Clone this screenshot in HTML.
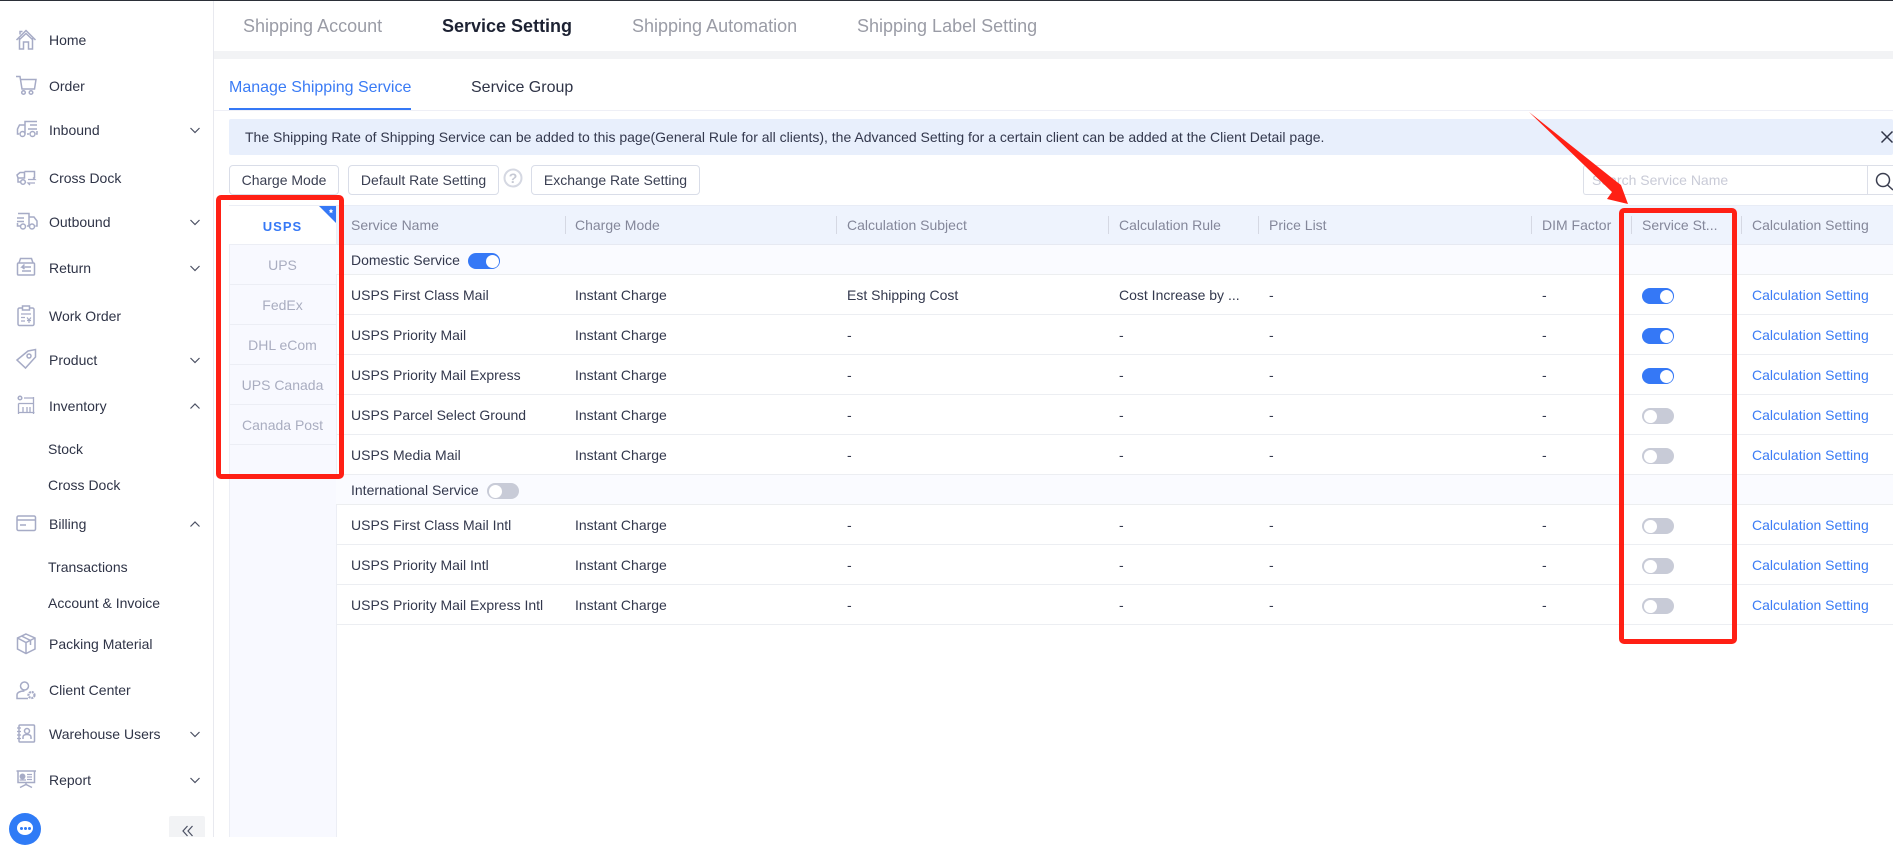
<!DOCTYPE html>
<html lang="en"><head><meta charset="utf-8"><title>Service Setting</title>
<style>
html,body{margin:0;padding:0;background:#fff}
body{width:1893px;height:837px;overflow:hidden;position:relative;font-family:"Liberation Sans",Arial,sans-serif;font-size:14px;color:#33384d}
div,span.a{position:absolute;white-space:nowrap;box-sizing:border-box}
.n{left:49px;height:20px;line-height:20px;color:#2f3447}
.s{left:48px;height:20px;line-height:20px;color:#2f3447}
.t{top:14px;height:24px;line-height:24px;font-size:18px;color:#9a9ca6}
.h{top:205px;height:40px;line-height:40px;color:#84879a}
.d{top:216px;width:1px;height:18px;background:#d5d8e3}
.l{left:229px;width:107px;height:40px;line-height:40px;text-align:center;color:#a9adc0;border-bottom:1px solid #eceef5}
.g{left:336px;width:1557px;background:#fafbff;border-bottom:1px solid #eceef0}
.r{left:336px;width:1557px;height:40px;border-bottom:1px solid #eceef2}
.c{height:40px;line-height:41px;color:#33384d}
.lk{left:1752px;color:#3b7cf5}
.tg{width:32px;height:16px;border-radius:8px}
.on{background:#3578f6}
.on:after{content:"";position:absolute;right:1.500px;top:1.500px;width:13px;height:13px;border-radius:50%;background:#fff}
.off{background:#c8cbd7}
.off:after{content:"";position:absolute;left:1.500px;top:1.500px;width:13px;height:13px;border-radius:50%;background:#fff}
.b{top:165px;height:30px;line-height:28px;border:1px solid #d9dde8;border-radius:4px;text-align:center;color:#3a3f52;background:#fff}
</style></head><body>

<div style="left:0;top:0;width:1893px;height:1px;background:#2b2f38;z-index:5"></div>
<div style="left:213px;top:0;width:1px;height:837px;background:#e8e9ef"></div>

<svg width="213" height="837" viewBox="0 0 213 837" style="position:absolute;left:0;top:0" fill="none" stroke="#a6abc6" stroke-width="1.500">
<!-- home -->
<path d="M16.500 40 26 30.500 35.500 40"/><path d="M19 40 26 33.500 33 40"/><path d="M19.500 38V49H23.500V42H28.500V49H32.500V38M20 34.500V31.500H22.500"/>
<!-- cart -->
<path d="M16 76.500H20L22 89H34.500L36 79.500H21"/><circle cx="23.500" cy="92.500" r="1.800"/><circle cx="31" cy="92.500" r="1.800"/>
<!-- inbound -->
<path d="M25 133.500V121.500H37M25 125H19.500L17.500 129V134H19M27 134H29M36 134H37V131"/><circle cx="22.500" cy="134" r="2.500"/><circle cx="32.500" cy="134" r="2.500"/><path d="M30 125H37M28 129H37"/>
<!-- cross dock -->
<path d="M24.500 171.500H34.500V178M24.500 171.500V178H18L17 175L20 172.500H24.500M18 178V182H20"/><circle cx="23" cy="182" r="2.300"/><path d="M28 179.500H35L33 177.500M35 183H28L30 185" stroke-width="1.300"/>
<!-- outbound -->
<path d="M18 213.500H29V226H27M20 226H17.500V223M17 218H24M17 221.500H24M29 217H34L37 221V226H35.500"/><circle cx="23" cy="226.500" r="2.500"/><circle cx="32" cy="226.500" r="2.500"/>
<!-- return -->
<rect x="17.500" y="263" width="17" height="12" rx="1"/><path d="M19 263 20.500 258.500H31.500L33 263M31 267H22L24.500 264.500M22 267 24.500 269M22 271H31"/>
<!-- work order -->
<rect x="18" y="308" width="16" height="17.500" rx="1.500"/><rect x="22.500" y="306" width="7" height="4" fill="#fff"/><path d="M21 314H31M21 317.500H25M21 321H25M27 317.500 29 320 31 317.500M29 320V323M27 320.500H31" stroke-width="1.200"/>
<!-- product -->
<path d="M17 360 28 351 35.500 349.500 35.500 357 25.500 368Z"/><circle cx="29" cy="356" r="2"/>
<!-- inventory -->
<circle cx="20" cy="398" r="1.800"/><path d="M24 398H34M18.500 403.500H34M18 412.500H34.500M18.500 403.500V414M33.500 397V414M23 407V412M27 407V412M30 407V412" stroke-width="1.300"/>
<!-- billing -->
<rect x="17" y="516" width="18.500" height="14.500" rx="1.500"/><path d="M17 520H35.500M20 525H26"/>
<!-- packing -->
<path d="M26 634 35 638V649L26 653.500 17.500 649V638ZM17.500 638 26 642.500 35 638M26 642.500V653.500M21.500 636 30.500 640.500V645"/>
<!-- client -->
<circle cx="24.500" cy="686" r="4"/><path d="M28 698.500H17V695C17 692.500 20 691 24.500 691"/><circle cx="31.500" cy="695" r="3" stroke-width="2.200" stroke-dasharray="2 .8"/><circle cx="31.500" cy="695" r="1" stroke="none" fill="#fff"/>
<!-- warehouse users -->
<rect x="19" y="725" width="15.500" height="17" rx="1"/><path d="M17 728H21M17 731.500H21M17 735H21M17 738.500H21" stroke-width="1.200"/><circle cx="27" cy="731" r="2.500"/><path d="M23 739V737C23 735 25 734.500 27 734.500S31 735 31 737V739"/>
<!-- report -->
<path d="M16.500 771H36M18 771.500V782.500H34.500V771.500M26 782.500V785M20 787.500 26 784.500 32 787.500"/><circle cx="22.500" cy="776.500" r="2.200" fill="#a6abc6"/><path d="M27 774.500H32M27 777H32M27 779.500H32M19.500 780H26" stroke-width="1.200"/>
<!-- chevrons -->
<g stroke="#4b5063" stroke-width="1.200">
<path d="M190.500 128 195 132.500 199.500 128M190.500 220 195 224.500 199.500 220M190.500 266 195 270.500 199.500 266M190.500 358 195 362.500 199.500 358M190.500 732 195 736.500 199.500 732M190.500 778 195 782.500 199.500 778"/>
<path d="M190.500 408.500 195 404 199.500 408.500M190.500 526.500 195 522 199.500 526.500"/>
</g>
</svg>

<div class="n" style="top:30px">Home</div>
<div class="n" style="top:76px">Order</div>
<div class="n" style="top:120px">Inbound</div>
<div class="n" style="top:168px">Cross Dock</div>
<div class="n" style="top:212px">Outbound</div>
<div class="n" style="top:258px">Return</div>
<div class="n" style="top:306px">Work Order</div>
<div class="n" style="top:350px">Product</div>
<div class="n" style="top:396px">Inventory</div>
<div class="s" style="top:439px">Stock</div>
<div class="s" style="top:475px">Cross Dock</div>
<div class="n" style="top:514px">Billing</div>
<div class="s" style="top:557px">Transactions</div>
<div class="s" style="top:593px">Account &amp; Invoice</div>
<div class="n" style="top:634px">Packing Material</div>
<div class="n" style="top:680px">Client Center</div>
<div class="n" style="top:724px">Warehouse Users</div>
<div class="n" style="top:770px">Report</div>

<div style="left:9px;top:813px;width:32px;height:32px;border-radius:50%;background:#2f7bf6"></div>
<div style="left:17px;top:821px;width:16px;height:14px;border-radius:50%;background:#fff"></div>
<div style="left:20px;top:827px;width:3px;height:3px;border-radius:50%;background:#2f7bf6;box-shadow:4px 0 #2f7bf6,8px 0 #2f7bf6"></div>
<div style="left:169px;top:816px;width:36px;height:21px;background:#f2f3f5;border-radius:2px 2px 0 0"></div>
<svg width="12" height="12" style="position:absolute;left:182px;top:825px" fill="none" stroke="#4b5063" stroke-width="1.200"><path d="M5.500 1 1 6 5.500 11M10.500 1 6 6 10.500 11"/></svg>

<!-- top tabs -->
<div class="t" style="left:243px">Shipping Account</div>
<div class="t" style="left:442px;font-weight:bold;color:#1d2233">Service Setting</div>
<div class="t" style="left:632px">Shipping Automation</div>
<div class="t" style="left:857px">Shipping Label Setting</div>
<div style="left:214px;top:51px;width:1679px;height:8px;background:#f2f3f5"></div>

<!-- sub tabs -->
<div style="left:229px;top:77px;font-size:16px;line-height:22px;color:#3a7bf5">Manage Shipping Service</div>
<div style="left:471px;top:77px;font-size:16px;line-height:22px;color:#2f3447">Service Group</div>
<div style="left:214px;top:110px;width:1679px;height:1px;background:#eeeff6"></div>
<div style="left:229px;top:108px;width:182px;height:2px;background:#3578f6"></div>

<!-- banner -->
<div style="left:229px;top:119px;width:1664px;height:36px;background:#e8effc;border-radius:2px"></div>
<div style="left:245px;top:119px;line-height:36px;color:#33384d">The Shipping Rate of Shipping Service can be added to this page(General Rule for all clients), the Advanced Setting for a certain client can be added at the Client Detail page.</div>
<svg width="14" height="14" style="position:absolute;left:1880px;top:130px" fill="none" stroke="#2f3447" stroke-width="1.500"><path d="M1.500 1.500 12.500 12.500M12.500 1.500 1.500 12.500"/></svg>

<!-- buttons -->
<div class="b" style="left:229px;width:110px">Charge Mode</div>
<div class="b" style="left:348px;width:151px">Default Rate Setting</div>
<svg width="20" height="20" style="position:absolute;left:503px;top:168px"><circle cx="10" cy="10" r="8.500" fill="none" stroke="#d5d8e2" stroke-width="2"/><text x="10" y="15" font-family="Liberation Sans" font-size="14" font-weight="bold" text-anchor="middle" fill="#c6c9d4">?</text></svg>
<div class="b" style="left:531px;width:169px">Exchange Rate Setting</div>

<!-- search -->
<div style="left:1583px;top:165px;width:310px;height:30px;border:1px solid #dcdfe8;border-right:0;border-radius:3px 0 0 3px"></div>
<div style="left:1867px;top:165px;width:1px;height:30px;background:#dcdfe8"></div>
<div style="left:1592px;top:165px;line-height:30px;color:#c9cbd7">Search Service Name</div>
<svg width="26" height="24" style="position:absolute;left:1867px;top:169px" fill="none" stroke="#3b3f50" stroke-width="1.500"><circle cx="16" cy="11" r="6.500"/><path d="M20.500 16 26 21"/></svg>

<!-- left carrier tabs -->
<div style="left:229px;top:205px;width:108px;height:632px;background:#f8f9ff;border-left:1px solid #eceef5;border-right:1px solid #eceef5"></div>
<div class="l" style="top:205px;background:#fff;color:#3578f6;font-weight:bold;font-size:13px;letter-spacing:1px;border-top:1px solid #eceef5;line-height:41px">USPS</div>
<svg width="17" height="17" style="position:absolute;left:319px;top:206px"><path d="M0 0H17V17Z" fill="#3578f6"/><path d="M12 2.500 12.700 4.200 14.300 4.400 13.100 5.500 13.400 7.200 12 6.300 10.600 7.200 10.900 5.500 9.700 4.400 11.300 4.200Z" fill="#fff"/></svg>
<div class="l" style="top:245px">UPS</div>
<div class="l" style="top:285px">FedEx</div>
<div class="l" style="top:325px">DHL eCom</div>
<div class="l" style="top:365px">UPS Canada</div>
<div class="l" style="top:405px">Canada Post</div>

<!-- table head -->
<div style="left:337px;top:205px;width:1556px;height:40px;background:#eef3fd;border-top:1px solid #e8ecf6;border-bottom:1px solid #e6e9f2"></div>
<div class="h" style="left:351px">Service Name</div>
<div class="d" style="left:565px"></div><div class="h" style="left:575px">Charge Mode</div>
<div class="d" style="left:836px"></div><div class="h" style="left:847px">Calculation Subject</div>
<div class="d" style="left:1108px"></div><div class="h" style="left:1119px">Calculation Rule</div>
<div class="d" style="left:1258px"></div><div class="h" style="left:1269px">Price List</div>
<div class="d" style="left:1531px"></div><div class="h" style="left:1542px">DIM Factor</div>
<div class="d" style="left:1631px"></div><div class="h" style="left:1642px">Service St...</div>
<div class="d" style="left:1741px"></div><div class="h" style="left:1752px">Calculation Setting</div>

<!-- group 1 -->
<div class="g" style="top:245px;height:30px"></div>
<div style="left:351px;top:245px;line-height:30px">Domestic Service</div>
<div class="tg on" style="left:468px;top:253px"></div>

<!-- rows -->
<div class="r" style="top:275px"></div><div class="r" style="top:315px"></div><div class="r" style="top:355px"></div><div class="r" style="top:395px"></div><div class="r" style="top:435px"></div>

<div class="c" style="left:351px;top:275px">USPS First Class Mail</div><div class="c" style="left:575px;top:275px">Instant Charge</div><div class="c" style="left:847px;top:275px">Est Shipping Cost</div><div class="c" style="left:1119px;top:275px">Cost Increase by ...</div><div class="c" style="left:1269px;top:275px">-</div><div class="c" style="left:1542px;top:275px">-</div><div class="tg on" style="left:1642px;top:288px"></div><div class="c lk" style="top:275px">Calculation Setting</div>

<div class="c" style="left:351px;top:315px">USPS Priority Mail</div><div class="c" style="left:575px;top:315px">Instant Charge</div><div class="c" style="left:847px;top:315px">-</div><div class="c" style="left:1119px;top:315px">-</div><div class="c" style="left:1269px;top:315px">-</div><div class="c" style="left:1542px;top:315px">-</div><div class="tg on" style="left:1642px;top:328px"></div><div class="c lk" style="top:315px">Calculation Setting</div>

<div class="c" style="left:351px;top:355px">USPS Priority Mail Express</div><div class="c" style="left:575px;top:355px">Instant Charge</div><div class="c" style="left:847px;top:355px">-</div><div class="c" style="left:1119px;top:355px">-</div><div class="c" style="left:1269px;top:355px">-</div><div class="c" style="left:1542px;top:355px">-</div><div class="tg on" style="left:1642px;top:368px"></div><div class="c lk" style="top:355px">Calculation Setting</div>

<div class="c" style="left:351px;top:395px">USPS Parcel Select Ground</div><div class="c" style="left:575px;top:395px">Instant Charge</div><div class="c" style="left:847px;top:395px">-</div><div class="c" style="left:1119px;top:395px">-</div><div class="c" style="left:1269px;top:395px">-</div><div class="c" style="left:1542px;top:395px">-</div><div class="tg off" style="left:1642px;top:408px"></div><div class="c lk" style="top:395px">Calculation Setting</div>

<div class="c" style="left:351px;top:435px">USPS Media Mail</div><div class="c" style="left:575px;top:435px">Instant Charge</div><div class="c" style="left:847px;top:435px">-</div><div class="c" style="left:1119px;top:435px">-</div><div class="c" style="left:1269px;top:435px">-</div><div class="c" style="left:1542px;top:435px">-</div><div class="tg off" style="left:1642px;top:448px"></div><div class="c lk" style="top:435px">Calculation Setting</div>

<!-- group 2 -->
<div class="g" style="top:475px;height:30px"></div>
<div style="left:351px;top:475px;line-height:30px">International Service</div>
<div class="tg off" style="left:487px;top:483px"></div>

<div class="r" style="top:505px"></div><div class="r" style="top:545px"></div><div class="r" style="top:585px"></div>

<div class="c" style="left:351px;top:505px">USPS First Class Mail Intl</div><div class="c" style="left:575px;top:505px">Instant Charge</div><div class="c" style="left:847px;top:505px">-</div><div class="c" style="left:1119px;top:505px">-</div><div class="c" style="left:1269px;top:505px">-</div><div class="c" style="left:1542px;top:505px">-</div><div class="tg off" style="left:1642px;top:518px"></div><div class="c lk" style="top:505px">Calculation Setting</div>

<div class="c" style="left:351px;top:545px">USPS Priority Mail Intl</div><div class="c" style="left:575px;top:545px">Instant Charge</div><div class="c" style="left:847px;top:545px">-</div><div class="c" style="left:1119px;top:545px">-</div><div class="c" style="left:1269px;top:545px">-</div><div class="c" style="left:1542px;top:545px">-</div><div class="tg off" style="left:1642px;top:558px"></div><div class="c lk" style="top:545px">Calculation Setting</div>

<div class="c" style="left:351px;top:585px">USPS Priority Mail Express Intl</div><div class="c" style="left:575px;top:585px">Instant Charge</div><div class="c" style="left:847px;top:585px">-</div><div class="c" style="left:1119px;top:585px">-</div><div class="c" style="left:1269px;top:585px">-</div><div class="c" style="left:1542px;top:585px">-</div><div class="tg off" style="left:1642px;top:598px"></div><div class="c lk" style="top:585px">Calculation Setting</div>

<!-- red annotations -->
<div style="left:216px;top:195px;width:128px;height:284px;border:5px solid #ff2015;border-radius:5px;z-index:6"></div>
<div style="left:1619px;top:208px;width:118px;height:436px;border:5px solid #ff2015;border-radius:5px;z-index:6"></div>
<svg width="120" height="110" style="position:absolute;left:1520px;top:105px;z-index:7"><path d="M9 7 97 77 101 80 108 99 87 94 92 87Z" fill="#ff2015"/></svg>
</body></html>
